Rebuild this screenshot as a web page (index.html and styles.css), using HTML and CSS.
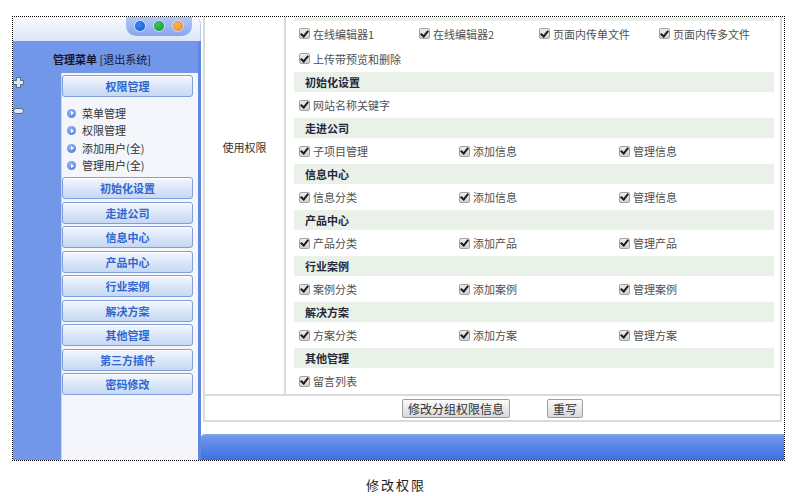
FILE: index.html
```html
<!DOCTYPE html>
<html lang="zh-CN">
<head>
<meta charset="utf-8">
<title>修改权限</title>
<link rel="stylesheet" href="styles.css">
</head>
<body>
<div class="frame">
  <aside class="sidebar">
    <div class="side-head">
      <div class="tab">
        <span class="dot dot-blue"></span>
        <span class="dot dot-green"></span>
        <span class="dot dot-orange"></span>
      </div>
    </div>
    <div class="side-lower">
      <div class="side-title"><b>管理菜单</b> [退出系统]</div>
      <div class="side-body">
        <div class="toggles">
          <svg class="ico-plus" width="11" height="11" viewBox="0 0 11 11"><path d="M3.5 0.5h4v3h3v4h-3v3h-4v-3h-3v-4h3z" fill="#dfe7f2" stroke="#5a6d88"/></svg>
          <svg class="ico-minus" width="11" height="6" viewBox="0 0 11 6"><rect x="0.5" y="0.5" width="10" height="5" rx="2.5" fill="#dfe7f2" stroke="#5a6d88"/></svg>
        </div>
        <nav class="panel">
          <div class="menu-btn">权限管理</div>
          <ul class="submenu">
            <li><span class="bullet"></span>菜单管理</li>
            <li><span class="bullet"></span>权限管理</li>
            <li><span class="bullet"></span>添加用户(全)</li>
            <li><span class="bullet"></span>管理用户(全)</li>
          </ul>
          <div class="menu-btn">初始化设置</div>
          <div class="menu-btn">走进公司</div>
          <div class="menu-btn">信息中心</div>
          <div class="menu-btn">产品中心</div>
          <div class="menu-btn">行业案例</div>
          <div class="menu-btn">解决方案</div>
          <div class="menu-btn">其他管理</div>
          <div class="menu-btn">第三方插件</div>
          <div class="menu-btn">密码修改</div>
        </nav>
      </div>
    </div>
  </aside>
  <main class="main">
    <div class="perm-table">
      <div class="perm-row">
        <div class="label-cell">使用权限</div>
        <div class="content-cell">
          <div class="sec-cut"></div>
          <div class="items c4">
            <label class="item"><span class="cb"></span>在线编辑器1</label>
            <label class="item"><span class="cb"></span>在线编辑器2</label>
            <label class="item"><span class="cb"></span>页面内传单文件</label>
            <label class="item"><span class="cb"></span>页面内传多文件</label>
            <label class="item"><span class="cb"></span>上传带预览和删除</label>
          </div>
          <div class="sec-head">初始化设置</div>
          <div class="items c3">
            <label class="item"><span class="cb"></span>网站名称关键字</label>
          </div>
          <div class="sec-head">走进公司</div>
          <div class="items c3">
            <label class="item"><span class="cb"></span>子项目管理</label>
            <label class="item"><span class="cb"></span>添加信息</label>
            <label class="item"><span class="cb"></span>管理信息</label>
          </div>
          <div class="sec-head">信息中心</div>
          <div class="items c3">
            <label class="item"><span class="cb"></span>信息分类</label>
            <label class="item"><span class="cb"></span>添加信息</label>
            <label class="item"><span class="cb"></span>管理信息</label>
          </div>
          <div class="sec-head">产品中心</div>
          <div class="items c3">
            <label class="item"><span class="cb"></span>产品分类</label>
            <label class="item"><span class="cb"></span>添加产品</label>
            <label class="item"><span class="cb"></span>管理产品</label>
          </div>
          <div class="sec-head">行业案例</div>
          <div class="items c3">
            <label class="item"><span class="cb"></span>案例分类</label>
            <label class="item"><span class="cb"></span>添加案例</label>
            <label class="item"><span class="cb"></span>管理案例</label>
          </div>
          <div class="sec-head">解决方案</div>
          <div class="items c3">
            <label class="item"><span class="cb"></span>方案分类</label>
            <label class="item"><span class="cb"></span>添加方案</label>
            <label class="item"><span class="cb"></span>管理方案</label>
          </div>
          <div class="sec-head">其他管理</div>
          <div class="items c3">
            <label class="item"><span class="cb"></span>留言列表</label>
          </div>
        </div>
      </div>
      <div class="btn-row">
        <button class="btn" type="button">修改分组权限信息</button>
        <button class="btn" type="button">重写</button>
      </div>
    </div>
    <div class="footer"></div>
  </main>
</div>
<div class="caption">修改权限</div>
</body>
</html>
```

FILE: styles.css
```css
* { box-sizing: border-box; }

body {
  margin: 0;
  background: #fff;
  font-family: "Noto Sans CJK SC", "Noto Sans", sans-serif;
  font-size: 11px;
  color: #333;
}

.frame {
  margin: 16px 0 0 12px;
  width: 773px;
  height: 445px;
  border: 1px dotted #000;
  display: flex;
}

/* ---------- sidebar ---------- */
.sidebar {
  width: 188px;
  display: flex;
  flex-direction: column;
}

.side-head {
  height: 24px;
  display: flex;
  justify-content: flex-end;
  padding-right: 8px;
  background: linear-gradient(#f8fafe, #dbe5f7);
  border-top-right-radius: 7px;
  border-right: 1px solid #b9caef;
}

.tab {
  width: 66px;
  height: 19px;
  display: flex;
  align-items: center;
  justify-content: center;
  gap: 9px;
  background: linear-gradient(#b3c8f6, #88a6ee);
  border-radius: 0 0 10px 10px;
  padding-bottom: 1px;
}

.dot {
  width: 10px;
  height: 10px;
  border-radius: 50%;
  box-shadow: 0 0 0 1px rgba(255, 255, 255, 0.45);
}
.dot-blue { background: radial-gradient(circle at 40% 35%, #3d86ee, #0f55c8); }
.dot-green { background: radial-gradient(circle at 40% 35%, #3cc45a, #11962c); }
.dot-orange { background: radial-gradient(circle at 40% 35%, #ffb04e, #f2891e); }

.side-lower {
  flex: 1;
  display: flex;
  flex-direction: column;
  background: #7297e9;
  border-right: 3px solid #5f87e3;
}

.side-title {
  height: 32px;
  padding: 10px 0 0 40px;
  line-height: 16px;
  color: #15152e;
  white-space: nowrap;
}
.side-title b { font-weight: bold; }

.side-body {
  flex: 1;
  display: flex;
}

.toggles {
  width: 48px;
  display: flex;
  flex-direction: column;
  align-items: flex-start;
  padding-top: 4px;
  gap: 20px;
}

.panel {
  width: 137px;
  background: #f4f6fb;
  border-left: 1px solid #c9d6f2;
  padding-top: 2px;
}

.menu-btn {
  width: 131px;
  height: 22px;
  margin-bottom: 2.5px;
  border: 1px solid #7f9edb;
  border-radius: 3px;
  background: linear-gradient(#f3f7fe, #dbe7f8 50%, #c6d8f3);
  box-shadow: inset 0 1px 0 #fff;
  color: #3067cf;
  font-weight: bold;
  text-align: center;
  line-height: 20px;
}

.submenu {
  list-style: none;
  margin: 0 0 2.5px 0;
  padding: 5px 0 0 0;
}
.submenu li {
  height: 17.5px;
  line-height: 17.5px;
  display: flex;
  align-items: center;
  padding-left: 5px;
  color: #333;
}

.bullet {
  width: 9px;
  height: 9px;
  margin-right: 6px;
  border-radius: 50%;
  background: radial-gradient(circle at 40% 35%, #9ab9f2, #4673d2);
  display: flex;
  align-items: center;
  justify-content: center;
}
.bullet::after {
  content: "";
  width: 0;
  height: 0;
  margin-left: 1px;
  border-left: 3px solid #fff;
  border-top: 2px solid transparent;
  border-bottom: 2px solid transparent;
}

/* ---------- main ---------- */
.main {
  width: 583px;
  display: flex;
  flex-direction: column;
  background: #fff;
}

.perm-table {
  height: 405px;
  margin: 0 2px;
  border: 2px solid #dadada;
  border-top: none;
  display: flex;
  flex-direction: column;
}

.perm-row {
  height: 377px;
  display: flex;
}

.label-cell {
  width: 81px;
  border-right: 2px solid #dadada;
  padding-top: 122px;
  line-height: 16px;
  text-align: center;
  color: #333;
}

.content-cell {
  flex: 1;
  padding: 0 6px 0 8px;
  overflow: hidden;
}

.sec-cut {
  width: 480px;
  height: 4px;
  background: #eaf1e8;
}

.sec-head {
  width: 480px;
  height: 20px;
  line-height: 20px;
  padding-left: 11px;
  background: #eaf1e8;
  font-weight: bold;
  color: #26263a;
}

.items {
  width: 480px;
  display: grid;
}
.items.c4 {
  grid-template-columns: repeat(4, 120px);
  grid-auto-rows: 25px;
  padding-bottom: 1px;
}
.items.c3 {
  grid-template-columns: repeat(3, 160px);
  grid-auto-rows: 26px;
}

.item {
  display: flex;
  align-items: center;
  padding-left: 5px;
  color: #505050;
  white-space: nowrap;
}

.cb {
  width: 11px;
  height: 11px;
  margin-right: 3px;
  border: 1px solid #a2a2a2;
  border-radius: 2px;
  background: linear-gradient(#ececec, #d2d2d2);
  display: flex;
  align-items: center;
  justify-content: center;
  flex-shrink: 0;
}
.cb::after {
  content: "";
  width: 3px;
  height: 6px;
  margin-top: -2px;
  border: solid #1c1c1c;
  border-width: 0 2px 2px 0;
  transform: rotate(40deg);
}

.btn-row {
  flex: 1;
  border-top: 2px solid #dadada;
  display: flex;
  align-items: center;
  justify-content: center;
  gap: 37px;
}

.btn {
  height: 19px;
  padding: 0 5px;
  margin: 0;
  border: 1px solid #9e9e9e;
  border-radius: 2px;
  background: linear-gradient(#fcfcfc, #e9e9e9 50%, #d9d9d9);
  font-family: "Noto Sans CJK SC", "Noto Sans", sans-serif;
  font-size: 12px;
  line-height: 17px;
  color: #333;
}

.footer {
  height: 26px;
  margin-top: 12px;
  border-top-left-radius: 4px;
  background: linear-gradient(#86a8f0 0, #6e95eb 12%, #5483e6 55%, #3f70df 100%);
}

.caption {
  margin-top: 14px;
  padding-left: 366px;
  line-height: 20px;
  font-size: 13px;
  letter-spacing: 2px;
  color: #222;
}
```
